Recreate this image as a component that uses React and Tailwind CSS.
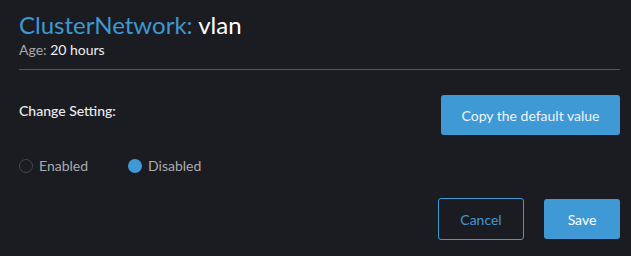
export default function App() {
  return (
    <div
      className="w-[631px] h-[256px] bg-[#1b1c22] text-[#e8e8ea] overflow-hidden"
      style={{ fontFamily: "Lato, 'Noto Sans', sans-serif" }}
    >
      <div className="pl-[19px] pr-[11px] pt-[10px]">
        {/* header */}
        <div className="pb-[10px] border-b border-[#54565c]">
          <h1 className="text-[24px] leading-[30px]">
            <span className="text-[#3d98d3]">ClusterNetwork:</span>{" "}
            <span className="text-white">vlan</span>
          </h1>
          <p className="mt-[1px] text-[14px] leading-[18px] text-[#a8a9ad]">
            Age: <span className="text-[#eeeef0]">20 hours</span>
          </p>
        </div>

        {/* setting */}
        <div className="flex items-start justify-between mt-[25px]">
          <span className="mt-[6px] text-[14px] leading-[20px] font-medium text-[#ececee]">
            Change Setting:
          </span>
          <button className="w-[179px] h-[40px] rounded-[3px] bg-[#3f99d5] text-[14px] text-[#eef4fa]">
            Copy the default value
          </button>
        </div>

        <div className="flex items-center mt-[20px] text-[14px] text-[#a9aaae]">
          <label className="flex items-center gap-[6px]">
            <span className="w-[14px] h-[14px] rounded-full border border-[#44464c]" />
            Enabled
          </label>
          <label className="flex items-center gap-[6px] ml-[40px]">
            <span className="w-[14px] h-[14px] rounded-full bg-[#3f99d5]" />
            Disabled
          </label>
        </div>

        <div className="flex justify-end items-center gap-[20px] mt-[22px]">
          <button className="w-[86px] h-[42px] rounded-[3px] border border-[#3f99d5] text-[14px] text-[#3f99d5]">
            Cancel
          </button>
          <button className="w-[76px] h-[40px] rounded-[3px] bg-[#3f99d5] text-[14px] text-white">
            Save
          </button>
        </div>
      </div>
    </div>
  );
}
